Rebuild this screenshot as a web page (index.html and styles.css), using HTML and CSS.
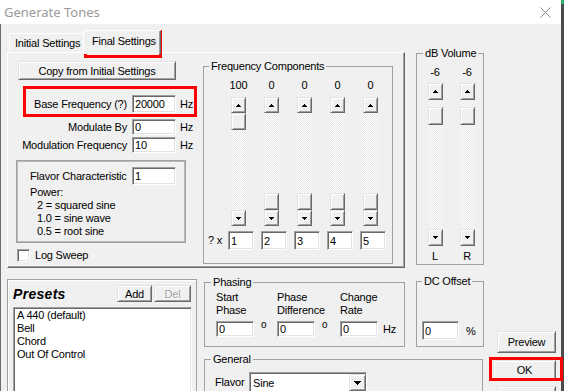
FILE: index.html
```html
<!DOCTYPE html>
<html>
<head>
<meta charset="utf-8">
<title>Generate Tones</title>
<link rel="stylesheet" href="styles.css">
</head>
<body>
<div class="window">
  <div class="titlebar">
    <span class="title">Generate Tones</span>
    <svg class="close" width="11" height="11" viewBox="0 0 11 11"><path d="M0.5 0.5L10.5 10.5M10.5 0.5L0.5 10.5" stroke="#8c8c8c" stroke-width="1" fill="none"/></svg>
  </div>
  <div class="client">
    <div class="top-row">
      <div class="tabs">
        <div class="tabstrip">
          <div class="tab tab-initial">Initial Settings</div>
          <div class="tab tab-final">Final Settings</div>
        </div>
        <div class="tabpanel">
          <div class="left-col">
            <div class="btn copy-btn">Copy from Initial Settings</div>
            <div class="frow frow-base"><span class="flabel">Base Frequency (?)</span><span class="input finput">20000</span><span class="unit">Hz</span></div>
            <div class="frow frow-mod"><span class="flabel">Modulate By</span><span class="input finput">0</span><span class="unit">Hz</span></div>
            <div class="frow frow-modf"><span class="flabel">Modulation Frequency</span><span class="input finput">10</span><span class="unit">Hz</span></div>
            <div class="subgroup">
              <div class="flavor-row"><span class="flavor-label">Flavor Characteristic</span><span class="input finput-flavor">1</span></div>
              <div class="power">
                <div>Power:</div>
                <div class="indent">2 = squared sine</div>
                <div class="indent">1.0 = sine wave</div>
                <div class="indent">0.5 = root sine</div>
              </div>
            </div>
            <div class="logsweep"><span class="checkbox"></span><span class="check-label">Log Sweep</span></div>
          </div>
          <fieldset class="group fc">
            <legend>Frequency Components</legend>
            <div class="fc-grid">
              <span></span>
              <span class="clabel">100</span>
              <span class="clabel">0</span>
              <span class="clabel">0</span>
              <span class="clabel">0</span>
              <span class="clabel">0</span>
              <span></span>
              <div class="vscroll">
                <div class="sbtn"><svg class="arr" width="5" height="3" viewBox="0 0 5 3"><path d="M2 0h1v1h-1zM1 1h3v1h-3zM0 2h5v1h-5z"/></svg></div>
                <div class="track"><div class="thumb"></div></div>
                <div class="sbtn"><svg class="arr" width="5" height="3" viewBox="0 0 5 3"><path d="M0 0h5v1h-5zM1 1h3v1h-3zM2 2h1v1h-1z"/></svg></div>
              </div>
              <div class="vscroll">
                <div class="sbtn"><svg class="arr" width="5" height="3" viewBox="0 0 5 3"><path d="M2 0h1v1h-1zM1 1h3v1h-3zM0 2h5v1h-5z"/></svg></div>
                <div class="track track-end"><div class="thumb"></div></div>
                <div class="sbtn"><svg class="arr" width="5" height="3" viewBox="0 0 5 3"><path d="M0 0h5v1h-5zM1 1h3v1h-3zM2 2h1v1h-1z"/></svg></div>
              </div>
              <div class="vscroll">
                <div class="sbtn"><svg class="arr" width="5" height="3" viewBox="0 0 5 3"><path d="M2 0h1v1h-1zM1 1h3v1h-3zM0 2h5v1h-5z"/></svg></div>
                <div class="track track-end"><div class="thumb"></div></div>
                <div class="sbtn"><svg class="arr" width="5" height="3" viewBox="0 0 5 3"><path d="M0 0h5v1h-5zM1 1h3v1h-3zM2 2h1v1h-1z"/></svg></div>
              </div>
              <div class="vscroll">
                <div class="sbtn"><svg class="arr" width="5" height="3" viewBox="0 0 5 3"><path d="M2 0h1v1h-1zM1 1h3v1h-3zM0 2h5v1h-5z"/></svg></div>
                <div class="track track-end"><div class="thumb"></div></div>
                <div class="sbtn"><svg class="arr" width="5" height="3" viewBox="0 0 5 3"><path d="M0 0h5v1h-5zM1 1h3v1h-3zM2 2h1v1h-1z"/></svg></div>
              </div>
              <div class="vscroll">
                <div class="sbtn"><svg class="arr" width="5" height="3" viewBox="0 0 5 3"><path d="M2 0h1v1h-1zM1 1h3v1h-3zM0 2h5v1h-5z"/></svg></div>
                <div class="track track-end"><div class="thumb"></div></div>
                <div class="sbtn"><svg class="arr" width="5" height="3" viewBox="0 0 5 3"><path d="M0 0h5v1h-5zM1 1h3v1h-3zM2 2h1v1h-1z"/></svg></div>
              </div>
              <span class="qx">? x</span>
              <span class="input fc-input">1</span>
              <span class="input fc-input">2</span>
              <span class="input fc-input">3</span>
              <span class="input fc-input">4</span>
              <span class="input fc-input">5</span>
            </div>
          </fieldset>
        </div>
      </div>
      <fieldset class="group vol">
        <legend>dB Volume</legend>
        <div class="vol-grid">
          <span class="clabel">-6</span>
          <span class="clabel">-6</span>
          <div class="vscroll">
            <div class="sbtn"><svg class="arr" width="5" height="3" viewBox="0 0 5 3"><path d="M2 0h1v1h-1zM1 1h3v1h-3zM0 2h5v1h-5z"/></svg></div>
            <div class="track"><div class="thumb"></div></div>
            <div class="sbtn"><svg class="arr" width="5" height="3" viewBox="0 0 5 3"><path d="M0 0h5v1h-5zM1 1h3v1h-3zM2 2h1v1h-1z"/></svg></div>
          </div>
          <div class="vscroll">
            <div class="sbtn"><svg class="arr" width="5" height="3" viewBox="0 0 5 3"><path d="M2 0h1v1h-1zM1 1h3v1h-3zM0 2h5v1h-5z"/></svg></div>
            <div class="track"><div class="thumb"></div></div>
            <div class="sbtn"><svg class="arr" width="5" height="3" viewBox="0 0 5 3"><path d="M0 0h5v1h-5zM1 1h3v1h-3zM2 2h1v1h-1z"/></svg></div>
          </div>
          <span class="clabel">L</span>
          <span class="clabel">R</span>
        </div>
      </fieldset>
    </div>
    <div class="bottom-row">
      <div class="presets">
        <div class="presets-head">
          <span class="presets-title">Presets</span>
          <span class="btn small-btn add-btn">Add</span>
          <span class="btn small-btn del-btn">Del</span>
        </div>
        <div class="listbox">
          <div>A 440 (default)</div>
          <div>Bell</div>
          <div>Chord</div>
          <div>Out Of Control</div>
        </div>
      </div>
      <div class="mid-col">
        <div class="mid-top">
          <fieldset class="group phasing">
            <legend>Phasing</legend>
            <div class="ph-grid">
              <div class="ph-item">
                <div class="ph-label">Start<br>Phase</div>
                <div class="ph-inrow"><span class="input ph-input">0</span><span class="deg">o</span></div>
              </div>
              <div class="ph-item">
                <div class="ph-label">Phase<br>Difference</div>
                <div class="ph-inrow"><span class="input ph-input">0</span><span class="deg">o</span></div>
              </div>
              <div class="ph-item">
                <div class="ph-label">Change<br>Rate</div>
                <div class="ph-inrow"><span class="input ph-input">0</span><span class="hz">Hz</span></div>
              </div>
            </div>
          </fieldset>
          <fieldset class="group dc">
            <legend>DC Offset</legend>
            <div class="dc-row"><span class="input dc-input">0</span><span class="pct">%</span></div>
          </fieldset>
        </div>
        <fieldset class="group general">
          <legend>General</legend>
          <div class="gen-row">
            <span class="gen-label">Flavor</span>
            <div class="combo">
              <span class="combo-text">Sine</span>
              <span class="btn combo-btn"><svg class="arr" width="7" height="4" viewBox="0 0 7 4"><path d="M0 0h7v1h-7zM1 1h5v1h-5zM2 2h3v1h-3zM3 3h1v1h-1z"/></svg></span>
            </div>
          </div>
        </fieldset>
      </div>
      <div class="btn-col">
        <div class="btn preview-btn">Preview</div>
        <div class="btn ok-btn">OK</div>
        <div class="btn cancel-btn"></div>
      </div>
    </div>
  </div>
</div>
<div class="redbox rb-tab"></div>
<div class="redbox rb-base"></div>
<div class="redbox rb-ok"></div>
</body>
</html>
```

FILE: styles.css
```css
* { box-sizing: border-box; }
html, body { margin: 0; padding: 0; }
body {
  width: 564px;
  height: 391px;
  overflow: hidden;
  position: relative;
  background: linear-gradient(#2fae6a 0 4px, #4b4b4b 4px);
  font-family: "Liberation Sans", Arial, sans-serif;
  font-size: 11px;
  letter-spacing: -0.2px;
  color: #000;
}
.window {
  width: 561px;
  height: 391px;
  display: flex;
  flex-direction: column;
  background: #f0f0f0;
}
.titlebar {
  height: 24px;
  flex: none;
  background: #fff;
  display: flex;
  align-items: center;
  justify-content: space-between;
  padding: 0 10px 0 4px;
}
.title {
  font-family: "Noto Sans", sans-serif;
  font-size: 13px;
  letter-spacing: 0;
  color: #999;
}
.close { display: block; }
.client {
  flex: 1;
  background: #f0f0f0;
  box-shadow: inset 1px 0 #6d6d6d;
  padding: 6px 0 0 7px;
  overflow: hidden;
}

/* generic controls */
.btn {
  background: #f0f0f0;
  border: 1px solid;
  border-color: #e3e3e3 #696969 #696969 #e3e3e3;
  box-shadow: inset 1px 1px #fff, inset -1px -1px #a0a0a0;
  display: flex;
  align-items: center;
  justify-content: center;
  white-space: nowrap;
  flex: none;
}
.input {
  display: flex;
  align-items: center;
  background: #fff;
  border: 1px solid;
  border-color: #a0a0a0 #fff #fff #a0a0a0;
  box-shadow: inset 1px 1px #696969, inset -1px -1px #e3e3e3;
  padding-left: 2px;
  white-space: nowrap;
  overflow: hidden;
  flex: none;
}
.group {
  margin: 0;
  padding: 0;
  min-width: 0;
  border: 1px solid #a0a0a0;
  flex: none;
}
.group legend {
  padding: 0 2px;
  margin-left: 6px;
  line-height: 12px;
}

/* top row */
.top-row { display: flex; align-items: flex-start; }
.tabs { width: 398px; flex: none; }
.tabstrip {
  height: 22px;
  display: flex;
  align-items: flex-start;
  padding-left: 2px;
  position: relative;
  z-index: 1;
}
.tab {
  background: #f0f0f0;
  border: 1px solid;
  border-color: #fff #696969 transparent #fff;
  border-bottom: 0;
  box-shadow: inset -1px 0 #a0a0a0;
  white-space: nowrap;
  flex: none;
}
.tab-initial {
  margin-top: 3px;
  height: 19px;
  width: 76px;
  padding: 1px 0 0 5px;
  line-height: 17px;
}
.tab-final {
  height: 24px;
  width: 78px;
  margin-left: -2px;
  padding: 4px 0 0 8px;
  line-height: 13px;
}
.tabpanel {
  height: 216px;
  display: flex;
  align-items: flex-start;
  border: 1px solid;
  border-color: #fff #696969 #696969 #fff;
  box-shadow: inset -1px -1px #a0a0a0;
}
.left-col {
  width: 195px;
  flex: none;
  display: flex;
  flex-direction: column;
  align-items: flex-start;
}
.copy-btn { margin: 8px 0 0 10px; width: 158px; height: 19px; }
.frow { display: flex; align-items: center; }
.flabel { width: 119px; text-align: right; white-space: nowrap; }
.finput { margin-left: 5px; width: 44px; height: 16px; }
.unit { margin-left: 4px; }
.frow-base { margin-top: 15px; height: 18px; }
.frow-base .finput { height: 18px; }
.frow-mod { margin-top: 6px; height: 16px; }
.frow-modf { margin-top: 2px; height: 16px; }
.subgroup {
  margin: 7px 0 0 8px;
  width: 170px;
  height: 83px;
  border: 1px solid #a0a0a0;
  box-shadow: inset 0 0 0 1px #b9b9b9;
  padding: 6px 0 0 13px;
}
.flavor-row { display: flex; align-items: center; height: 18px; }
.flavor-label { width: 102px; white-space: nowrap; }
.finput-flavor { width: 44px; height: 18px; }
.power { margin-top: 1px; line-height: 13px; }
.indent { padding-left: 7px; }
.logsweep { margin: 6px 0 0 9px; display: flex; align-items: center; height: 13px; }
.checkbox {
  width: 13px;
  height: 13px;
  background: #fff;
  border: 1px solid;
  border-color: #a0a0a0 #fff #fff #a0a0a0;
  box-shadow: inset 1px 1px #696969, inset -1px -1px #e3e3e3;
}
.check-label { margin-left: 5px; line-height: 13px; }

/* frequency components */
.fc { margin-top: 7px; width: 190px; height: 204px; padding-top: 7px; }
.fc legend { margin-left: 5px; }
.fc-grid {
  display: grid;
  grid-template-columns: 18px repeat(5, 33px);
  grid-template-rows: 13px 129px 19px;
  row-gap: 5px;
}
.clabel { text-align: center; line-height: 13px; }
.qx { padding-left: 4px; line-height: 19px; white-space: nowrap; }
.fc-input { margin-left: 6px; width: 26px; height: 19px; }

/* scrollbars */
.vscroll {
  width: 15px;
  display: flex;
  flex-direction: column;
  justify-self: center;
}
.sbtn, .thumb {
  background: #f0f0f0;
  border: 1px solid;
  border-color: #e3e3e3 #696969 #696969 #e3e3e3;
  box-shadow: inset 1px 1px #fff, inset -1px -1px #a0a0a0;
  flex: none;
}
.sbtn {
  height: 16px;
  display: flex;
  align-items: center;
  justify-content: center;
}
.arr { display: block; fill: #000; }
.track {
  flex: 1;
  display: flex;
  flex-direction: column;
  background: repeating-conic-gradient(#fff 0 25%, #e6e6e6 0 50%) 0 0 / 2px 2px;
}
.track-end { justify-content: flex-end; }
.thumb { height: 17px; }

/* volume */
.vol { margin: 17px 0 0 11px; width: 68px; height: 218px; padding-top: 7px; }
.vol-grid {
  margin-left: 2px;
  display: grid;
  grid-template-columns: 32px 32px;
  grid-template-rows: 13px 163px 13px;
  row-gap: 4px;
}
.vol .vscroll { height: 163px; }
.vol .sbtn { height: 17px; }
.vol .thumb { height: 18px; margin-top: 7px; }

/* bottom row */
.bottom-row { display: flex; align-items: flex-start; margin-top: 7px; }
.presets {
  margin-top: 4px;
  width: 190px;
  height: 130px;
  flex: none;
  border: 1px solid #a0a0a0;
  box-shadow: inset 1px 1px #fff;
  padding: 5px 5px 0 5px;
}
.presets-head { display: flex; align-items: center; height: 17px; }
.presets-title {
  font-weight: bold;
  font-style: italic;
  font-size: 14px;
  letter-spacing: 0.3px;
  margin-right: auto;
}
.small-btn { height: 17px; }
.add-btn { width: 35px; }
.del-btn { width: 37px; margin-left: 2px; color: #a0a0a0; text-shadow: 1px 1px #fff; }
.listbox {
  margin-top: 5px;
  width: 179px;
  height: 90px;
  background: #fff;
  border: 1px solid;
  border-color: #a0a0a0 #fff #fff #a0a0a0;
  box-shadow: inset 1px 1px #696969, inset -1px -1px #e3e3e3;
  padding: 1px 0 0 3px;
  line-height: 13px;
}
.mid-col { margin-left: 7px; width: 280px; flex: none; display: flex; flex-direction: column; }
.mid-top { display: flex; align-items: flex-start; }
.phasing { margin-top: 1px; width: 201px; height: 71px; padding-top: 3px; }
.ph-grid { margin-left: 11px; display: grid; grid-template-columns: 61px 63px auto; }
.ph-item { display: flex; flex-direction: column; }
.ph-label { line-height: 13px; white-space: nowrap; }
.ph-inrow { margin-top: 4px; display: flex; align-items: flex-start; }
.ph-input { width: 38px; height: 16px; }
.deg { font-size: 10px; line-height: 10px; margin: -1px 0 0 7px; }
.hz { margin-left: 5px; line-height: 16px; }
.dc { margin-left: 11px; width: 68px; height: 72px; padding-top: 34px; }
.dc legend { margin-left: 5px; }
.dc-row { margin-left: 5px; display: flex; align-items: center; }
.dc-input { width: 37px; height: 19px; }
.pct { margin-left: 7px; }
.general { margin-top: 6px; width: 279px; height: 60px; padding-top: 7px; }
.gen-row { margin-left: 10px; display: flex; align-items: flex-start; }
.gen-label { width: 34px; line-height: 21px; }
.combo {
  width: 118px;
  height: 21px;
  display: flex;
  align-items: center;
  background: #fff;
  border: 1px solid;
  border-color: #a0a0a0 #fff #fff #a0a0a0;
  box-shadow: inset 1px 1px #696969, inset -1px -1px #e3e3e3;
  padding-left: 3px;
}
.combo-text { margin-right: auto; }
.combo-btn { width: 17px; height: 17px; align-self: flex-start; margin-top: 1px; }
.btn-col { margin-left: 9px; display: flex; flex-direction: column; align-items: flex-start; }
.preview-btn { margin: 56px 0 0 4px; width: 59px; height: 22px; }
.ok-btn { margin-top: 7px; width: 63px; height: 20px; }
.cancel-btn { margin: 6px 0 0 4px; width: 59px; height: 22px; }

/* annotation overlays */
.redbox { position: absolute; border: 3px solid #ff0000; }
.rb-tab { left: 84px; top: 30px; width: 78px; height: 28px; }
.rb-base { left: 23px; top: 86px; width: 174px; height: 31px; }
.rb-ok { left: 489px; top: 357px; width: 74px; height: 24px; }
```
